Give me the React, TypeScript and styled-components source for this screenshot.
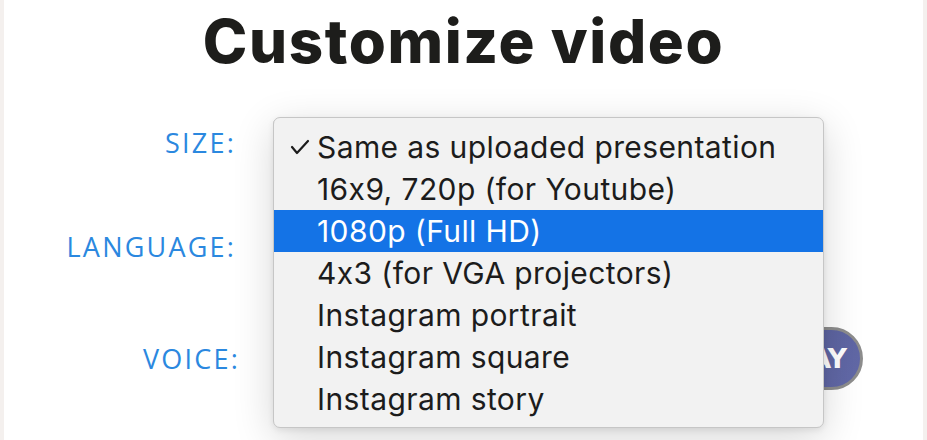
import { createGlobalStyle } from 'styled-components';
import styled from 'styled-components';

const GlobalStyle = createGlobalStyle`
  html, body {
    margin: 0;
    padding: 0;
    background: #f4f0ee;
    overflow: hidden;
  }
  * { box-sizing: border-box; }
`;

const Card = styled.div`
  position: relative;
  margin: 0 4px;
  height: 440px;
  background: #ffffff;
  overflow: hidden;
`;

const Title = styled.h1`
  margin: 0 0 8px;
  height: 82px;
  line-height: 82px;
  text-align: center;
  font-family: Inter, 'Open Sans', sans-serif;
  font-weight: 800;
  font-size: 60px;
  letter-spacing: 1.6px;
  color: #1d1d1b;
`;

const Form = styled.div`
  display: grid;
  grid-template-columns: 232px 1fr;
  grid-template-rows: 104px 104px 120px;
  column-gap: 37px;
  padding-right: 60px;
`;

const Label = styled.div<{ $nudge?: number }>`
  display: flex;
  align-items: center;
  justify-content: flex-end;
  margin-right: ${(p) => -(p.$nudge ?? 0)}px;
  font-family: 'Open Sans', sans-serif;
  font-size: 27px;
  font-weight: 400;
  color: #2b88df;
  letter-spacing: 2.2px;
`;

const Control = styled.div`
  display: flex;
  align-items: center;
  justify-content: space-between;
  gap: 16px;
`;

const SelectBox = styled.div`
  flex: 0 1 500px;
  height: 48px;
  border: 1px solid #cfcfcf;
  border-radius: 6px;
  background: #fff;
`;

const PlayButton = styled.button`
  height: 63px;
  padding: 0 14px 0 26px;
  border-radius: 32px;
  border: 3px solid #8d8d8d;
  background: linear-gradient(135deg, #59609a, #6269a8);
  color: #fff;
  font-family: 'DejaVu Sans', sans-serif;
  font-weight: 700;
  font-size: 27px;
  letter-spacing: -1px;
`;

const Popup = styled.ul`
  position: absolute;
  left: 269px;
  top: 117px;
  width: 551px;
  height: 311px;
  margin: 0;
  padding: 8px 0 0;
  list-style: none;
  background: #f2f2f2;
  border: 1px solid #c6c6c6;
  border-radius: 7px;
  box-shadow: 0 10px 40px rgba(0, 0, 0, 0.16), 0 2px 6px rgba(0, 0, 0, 0.08);
`;

const Option = styled.li<{ $active?: boolean }>`
  position: relative;
  height: 42px;
  display: flex;
  align-items: center;
  padding-left: 43px;
  font-family: Inter, 'Noto Sans', sans-serif;
  font-size: 30px;
  letter-spacing: 0.4px;
  color: ${(p) => (p.$active ? '#ffffff' : '#1c1c1c')};
  background: ${(p) => (p.$active ? '#1473e6' : 'transparent')};
`;

const Check = styled.svg`
  position: absolute;
  left: 16px;
  top: 12px;
  width: 20px;
  height: 18px;
`;

const options = [
  'Same as uploaded presentation',
  '16x9, 720p (for Youtube)',
  '1080p (Full HD)',
  '4x3 (for VGA projectors)',
  'Instagram portrait',
  'Instagram square',
  'Instagram story',
];

export default function App() {
  return (
    <>
      <GlobalStyle />
      <Card>
        <Title>Customize video</Title>
        <Form>
          <Label>SIZE:</Label>
          <Control>
            <SelectBox />
          </Control>
          <Label>LANGUAGE:</Label>
          <Control>
            <SelectBox />
          </Control>
          <Label $nudge={4}>VOICE:</Label>
          <Control>
            <SelectBox />
            <PlayButton>PLAY</PlayButton>
          </Control>
        </Form>
        <Popup>
          {options.map((o, i) => (
            <Option key={o} $active={i === 2}>
              {i === 0 && (
                <Check viewBox="0 0 20 18">
                  <polyline points="2,9 7,15 18,3" fill="none" stroke="#1c1c1c" strokeWidth="2.2" strokeLinecap="round" strokeLinejoin="round" />
                </Check>
              )}
              {o}
            </Option>
          ))}
        </Popup>
      </Card>
    </>
  );
}
